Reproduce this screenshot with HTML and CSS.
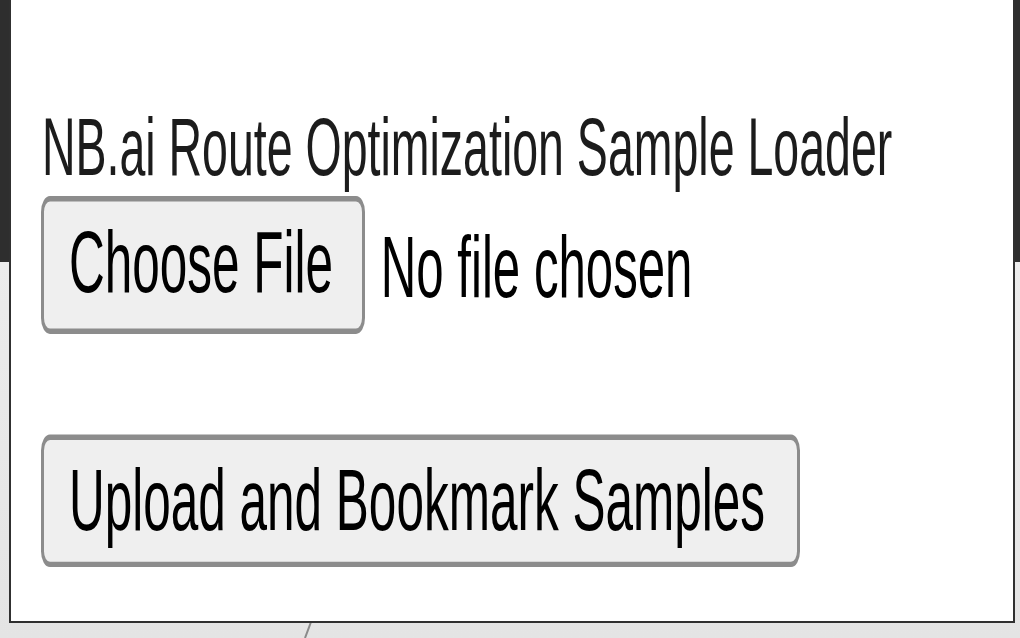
FILE: index.html
```html
<!DOCTYPE html>
<html lang="en">
<head>
<meta charset="utf-8">
<title>NB.ai Route Optimization Sample Loader</title>
<link rel="stylesheet" href="styles.css">
</head>
<body>
  <svg class="bg-mark" width="20" height="16" viewBox="0 0 20 16" aria-hidden="true">
    <path d="M13 0 L7 16" stroke="#8a8a8a" stroke-width="2" fill="none"/>
  </svg>
  <div class="popup">
    <div class="scaler">
      <div class="title">NB.ai Route Optimization Sample Loader</div>
      <div class="file-row">
        <button class="btn btn-choose" type="button">Choose File</button>
        <span class="file-status">No file chosen</span>
      </div>
      <div class="upload-row">
        <button class="btn btn-upload" type="button">Upload and Bookmark Samples</button>
      </div>
    </div>
  </div>
</body>
</html>
```

FILE: styles.css
```css
html, body {
  margin: 0;
  padding: 0;
}

body {
  width: 1020px;
  height: 638px;
  overflow: hidden;
  position: relative;
  background: linear-gradient(to bottom, #2e2e2e 0, #2e2e2e 262px, #ececec 262px, #e4e4e4 100%);
  font-family: "Liberation Sans", Arial, sans-serif;
}

.bg-mark {
  position: absolute;
  left: 298px;
  top: 622px;
}

.popup {
  position: absolute;
  left: 9px;
  top: 0;
  width: 1002px;
  height: 621px;
  background: #ffffff;
  border: 2px solid #303030;
  border-top: 0;
  overflow: hidden;
}

.scaler {
  width: 334px;
  transform-origin: 0 0;
  transform: scale(3, 5.3);
  padding: 19px 0 0 10.3px;
  box-sizing: border-box;
}

.title {
  font-size: 15.5px;
  line-height: 17.6px;
  color: #1c1c1c;
  white-space: nowrap;
}

.file-row {
  display: flex;
  align-items: center;
  gap: 5.3px;
}

.btn {
  font-family: "Liberation Sans", Arial, sans-serif;
  font-size: 16.5px;
  line-height: 18px;
  color: #000000;
  background: #efefef;
  border: 1px solid #8c8c8c;
  border-radius: 3px;
  box-sizing: border-box;
  padding: 0 10px 1.2px 8px;
  margin: 0;
  display: inline-flex;
  align-items: center;
  white-space: nowrap;
}

.btn-choose {
  height: 26px;
  width: 107.7px;
}

.file-status {
  font-size: 16.4px;
  line-height: 18px;
  color: #000000;
  white-space: nowrap;
}

.upload-row {
  margin-top: 19.1px;
  display: flex;
}

.btn-upload {
  height: 25.5px;
  width: 252.7px;
}
```
